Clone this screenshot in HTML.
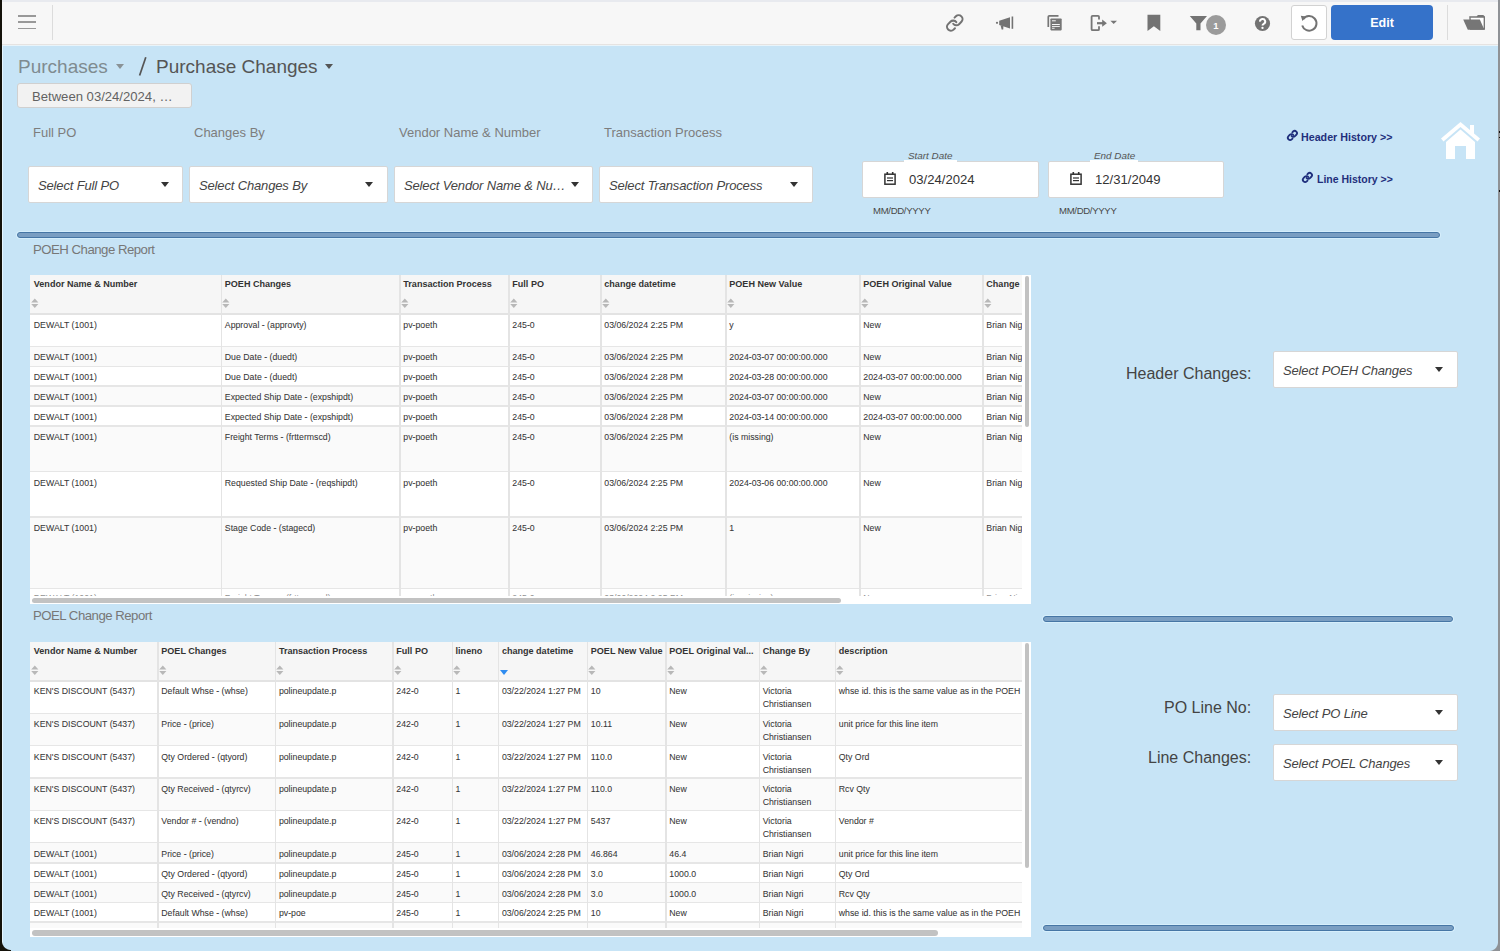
<!DOCTYPE html>
<html><head><meta charset="utf-8">
<style>
*{box-sizing:border-box;margin:0;padding:0}
html,body{width:1500px;height:951px;overflow:hidden;background:#c7e4f6;font-family:"Liberation Sans",sans-serif}
.a{position:absolute}
#frameL{left:0;top:0;width:2px;height:951px;background:#14120a}
#frameL2{left:2px;top:46px;width:1px;height:905px;background:#e6f6ff}
#frameR{left:1498px;top:0;width:2px;height:951px;background:#8f9296}
#topbar{left:2px;top:0;width:1496px;height:46px;background:#f7f7f7;border-bottom:1px solid #e9f4fa;box-shadow:inset 0 -1px 0 #e6e3e1}
#topstrip{left:2px;top:0;width:1496px;height:2px;background:#e8eaef}
.sep{width:1px;background:#dcdcdc}
.ham{left:18px;width:18px;height:1.7px;background:#999}
.crumb{font-size:19px;white-space:nowrap;line-height:1}
.caret{width:0;height:0;border-left:4px solid transparent;border-right:4px solid transparent;border-top:5px solid #333}
.lbl{font-size:13px;color:#7d7d7d;white-space:nowrap;line-height:1}
.dd{background:#fff;border:1px solid #d6d6d6;border-radius:2px}
.ddt{font-size:13px;font-style:italic;color:#444;white-space:nowrap;line-height:1;letter-spacing:-0.15px}
.bar{height:6px;border-radius:3px;background:#7a9ec2;border:1.5px solid #4676a5;box-shadow:0 0 0 1px #d6eefb}
.title{font-size:13.2px;letter-spacing:-0.5px;color:#777;white-space:nowrap;line-height:1}
.tbl{background:#fff;overflow:hidden}
.th{font-size:9.05px;font-weight:bold;color:#333;white-space:nowrap;line-height:1}
.td{font-size:8.75px;color:#363636;-webkit-text-stroke:0.05px #363636;white-space:nowrap;line-height:12.3px;transform:scaleY(1.08);transform-origin:0 0}
.rp{font-size:16px;color:#444;white-space:nowrap;line-height:1}
</style></head><body>
<div class="a" id="topbar"></div>
<div class="a" id="topstrip"></div>
<div class="a" id="frameL"></div>
<div class="a" id="frameL2"></div>
<div class="a" id="frameR"></div>
<div class="a" style="left:1498.5px;top:131px;width:1.5px;height:1.6px;background:#111"></div><div class="a" style="left:1498.5px;top:136.8px;width:1.5px;height:1.4px;background:#111"></div><div class="a" style="left:1498.5px;top:190px;width:1.5px;height:2px;background:#111"></div>
<div class="a" style="left:0;top:941px;width:11px;height:10px;background:radial-gradient(circle at 11px 0,rgba(0,0,0,0) 8.5px,#14120a 9.5px)"></div>
<div class="a" style="left:1489px;top:942px;width:11px;height:9px;background:radial-gradient(circle at 0 0,rgba(0,0,0,0) 8.5px,#8f9296 9.5px)"></div>

<!-- hamburger -->
<div class="a ham" style="top:15.1px"></div>
<div class="a ham" style="top:21.4px"></div>
<div class="a ham" style="top:27.6px"></div>
<div class="a sep" style="left:52px;top:5px;height:35px"></div>

<!-- Edit button -->
<div class="a" style="left:1331px;top:5px;width:102px;height:35px;background:#3572c9;border-radius:4px;color:#fff;font-size:12.5px;font-weight:bold;text-align:center;line-height:36px">Edit</div>
<div class="a" style="left:1291px;top:5px;width:36px;height:35px;background:#fff;border:1px solid #d2d2d2;border-radius:3px"></div>
<div class="a sep" style="left:1447px;top:5px;height:35px"></div>

<!-- breadcrumb -->
<div class="a crumb" style="left:18px;top:56.5px;color:#7f8b90">Purchases</div>
<div class="a caret" style="left:116px;top:64px;border-top-color:#8a9296"></div>
<svg class="a" style="left:136px;top:55px" width="14" height="23"><path d="M9.8 2.3 L3.6 20.6" stroke="#555" stroke-width="1.7"/></svg>
<div class="a crumb" style="left:156px;top:56.5px;color:#555">Purchase Changes</div>
<div class="a caret" style="left:325px;top:64px;border-top-color:#555"></div>

<div class="a" style="left:17px;top:83.3px;width:175px;height:24.4px;background:#f2f2f2;border:1px solid #d0d0d0;border-radius:3px"></div>
<div class="a" style="left:32px;top:90px;font-size:13.1px;color:#626262;white-space:nowrap;line-height:1">Between 03/24/2024, …</div>


<!-- toolbar icons -->
<svg class="a" style="left:940px;top:8px" width="30" height="30" viewBox="940 8 30 30">
 <g transform="translate(945.4 13.6) scale(0.78)" fill="none" stroke="#737373" stroke-width="2.6" stroke-linecap="round" stroke-linejoin="round">
  <path d="M10 13a5 5 0 0 0 7.54.54l3-3a5 5 0 0 0-7.07-7.07l-1.72 1.71"/>
  <path d="M14 11a5 5 0 0 0-7.54-.54l-3 3a5 5 0 0 0 7.07 7.07l1.71-1.71"/>
 </g>
</svg>
<svg class="a" style="left:990px;top:8px" width="30" height="30" viewBox="990 8 30 30">
 <g fill="#737373">
  <rect x="1011.6" y="16.5" width="1.6" height="12.3"/>
  <path d="M999.2 20.8 L1010 17.2 L1010 28.4 L999.2 25 Z"/>
  <circle cx="997" cy="22.8" r="1.1"/>
  <path d="M1000.6 25.2 L1003.4 26 L1003.2 29.4 L1001.6 29.4 Z"/>
 </g>
</svg>
<svg class="a" style="left:1040px;top:8px" width="80" height="30" viewBox="1040 8 80 30">
 <path d="M1048.3 27 V16.8 Q1048.3 15.8 1049.3 15.8 H1058.5" fill="none" stroke="#767676" stroke-width="1.7"/>
 <rect x="1050.4" y="18.4" width="11.3" height="12" rx="0.8" fill="#767676"/>
 <g fill="#f7f7f7">
  <rect x="1052" y="20.3" width="3.8" height="1"/>
  <rect x="1052" y="24" width="7.8" height="1"/>
  <rect x="1052" y="26" width="7.8" height="0.9"/>
  <rect x="1052" y="27.8" width="2.6" height="0.9"/>
 </g>
 <path d="M1099 19.5 V16.8 Q1099 15.8 1098 15.8 H1092.6 Q1091.6 15.8 1091.6 16.8 V29.2 Q1091.6 30.2 1092.6 30.2 H1098 Q1099 30.2 1099 29.2 V26.3" fill="none" stroke="#767676" stroke-width="1.8"/>
 <rect x="1097" y="22.1" width="6" height="2.2" fill="#767676"/>
 <path d="M1102.2 19.6 L1106.9 23.2 L1102.2 26.8 Z" fill="#767676"/>
 <path d="M1110.4 20.8 H1117 L1113.7 24 Z" fill="#767676"/>
</svg>
<svg class="a" style="left:1146px;top:14px" width="16" height="18" viewBox="0 0 16 18">
 <path d="M1.5 0.8 H14.3 V17 L7.9 12.3 L1.5 17 Z" fill="#737373"/>
</svg>
<svg class="a" style="left:1189px;top:15px" width="19" height="16" viewBox="0 0 19 16">
 <path d="M0.8 1 H18 L11.5 8.5 V15.2 H7.3 V8.5 Z" fill="#737373"/>
</svg>
<div class="a" style="left:1206px;top:14.5px;width:20px;height:20px;border-radius:50%;background:#9b9b9b;color:#fff;font-size:9.5px;font-weight:bold;text-align:center;line-height:21px">1</div>
<svg class="a" style="left:1254px;top:15px" width="17" height="17" viewBox="0 0 17 17">
 <circle cx="8.5" cy="8.5" r="7.6" fill="#737373"/>
 <path d="M6 6.6 a2.6 2.5 0 1 1 3.7 2.2 c-0.9 0.5 -1.2 0.9 -1.2 1.8" fill="none" stroke="#fff" stroke-width="2"/>
 <circle cx="8.5" cy="12.9" r="1.15" fill="#fff"/>
</svg>
<svg class="a" style="left:1299px;top:13px" width="20" height="20" viewBox="0 0 20 20">
 <path d="M4.2 6.2 A7.3 7.3 0 1 1 3.2 12.5" fill="none" stroke="#737373" stroke-width="2"/>
 <path d="M1.8 2.8 L7.2 3.6 L3.4 8 Z" fill="#737373"/>
</svg>
<svg class="a" style="left:1460px;top:10px" width="30" height="24" viewBox="1460 10 30 24">
 <path d="M1469.2 16.3 H1476.6 L1478 14.9 H1483.2 L1485 16.6 V29.8 H1470 Z" fill="#767676"/>
 <path d="M1470.6 17.7 H1483.6 V28 H1472 Z" fill="#fff"/>
 <path d="M1463.2 19.5 H1479.8 L1484.4 29.8 H1467.8 Z" fill="#767676"/>
</svg>

<!-- filter labels -->
<div class="a lbl" style="left:33px;top:126px">Full PO</div>
<div class="a lbl" style="left:194px;top:126px">Changes By</div>
<div class="a lbl" style="left:399px;top:126px">Vendor Name &amp; Number</div>
<div class="a lbl" style="left:604px;top:126px">Transaction Process</div>

<!-- dropdowns -->
<div class="a dd" style="left:28px;top:166px;width:155px;height:37px"></div>
<div class="a ddt" style="left:38px;top:179px">Select Full PO</div>
<div class="a caret" style="left:161px;top:182px"></div>
<div class="a dd" style="left:189px;top:166px;width:199px;height:37px"></div>
<div class="a ddt" style="left:199px;top:179px">Select Changes By</div>
<div class="a caret" style="left:365px;top:182px"></div>
<div class="a dd" style="left:394px;top:166px;width:199px;height:37px"></div>
<div class="a ddt" style="left:404px;top:179px">Select Vendor Name &amp; Nu…</div>
<div class="a caret" style="left:571px;top:182px"></div>
<div class="a dd" style="left:599px;top:166px;width:214px;height:37px"></div>
<div class="a ddt" style="left:609px;top:179px">Select Transaction Process</div>
<div class="a caret" style="left:790px;top:182px"></div>

<!-- dates -->
<div class="a dd" style="left:862px;top:160.5px;width:177px;height:37px"></div>
<div class="a" style="left:904px;top:159.5px;width:53px;height:2.5px;background:#fff"></div>
<div class="a" style="left:908px;top:151px;font-size:9.9px;font-style:italic;color:#555;line-height:1;white-space:nowrap">Start Date</div>
<svg class="a cal" style="left:884px;top:172px" width="12" height="13" viewBox="0 0 12 13"><g fill="none" stroke="#333" stroke-width="1.5"><rect x="0.9" y="2.2" width="10.2" height="10"/></g><g fill="#333"><rect x="2.5" y="0" width="1.6" height="3"/><rect x="7.9" y="0" width="1.6" height="3"/><rect x="3" y="5.4" width="6" height="1.2"/><rect x="3" y="8" width="6" height="1.2"/></g></svg>
<div class="a" style="left:909px;top:173px;font-size:13.1px;color:#333;line-height:1;white-space:nowrap">03/24/2024</div>
<div class="a" style="left:873px;top:206px;font-size:9.6px;letter-spacing:-0.33px;color:#484848;line-height:1;white-space:nowrap">MM/DD/YYYY</div>

<div class="a dd" style="left:1048px;top:160.5px;width:176px;height:37px"></div>
<div class="a" style="left:1090px;top:159.5px;width:48px;height:2.5px;background:#fff"></div>
<div class="a" style="left:1094px;top:151px;font-size:9.9px;font-style:italic;color:#555;line-height:1;white-space:nowrap">End Date</div>
<svg class="a cal" style="left:1070px;top:172px" width="12" height="13" viewBox="0 0 12 13"><g fill="none" stroke="#333" stroke-width="1.5"><rect x="0.9" y="2.2" width="10.2" height="10"/></g><g fill="#333"><rect x="2.5" y="0" width="1.6" height="3"/><rect x="7.9" y="0" width="1.6" height="3"/><rect x="3" y="5.4" width="6" height="1.2"/><rect x="3" y="8" width="6" height="1.2"/></g></svg>
<div class="a" style="left:1095px;top:173px;font-size:13.1px;color:#333;line-height:1;white-space:nowrap">12/31/2049</div>
<div class="a" style="left:1059px;top:206px;font-size:9.6px;letter-spacing:-0.33px;color:#484848;line-height:1;white-space:nowrap">MM/DD/YYYY</div>

<!-- history links -->
<svg class="a" style="left:1283.9px;top:127.1px" width="18" height="18" viewBox="1283.9 127.1 18 18"><g transform="translate(1286.8 130.0) scale(0.46)" fill="none" stroke="#1f2f7c" stroke-width="3.9" stroke-linecap="round" stroke-linejoin="round"><path d="M10 13a5 5 0 0 0 7.54.54l3-3a5 5 0 0 0-7.07-7.07l-1.72 1.71"/><path d="M14 11a5 5 0 0 0-7.54-.54l-3 3a5 5 0 0 0 7.07 7.07l1.71-1.71"/></g></svg>
<div class="a" style="left:1301px;top:131.8px;font-size:10.7px;font-weight:bold;color:#1f2f7c;line-height:1;white-space:nowrap">Header History &gt;&gt;</div>
<svg class="a" style="left:1298.8px;top:169.2px" width="18" height="18" viewBox="1298.8 169.2 18 18"><g transform="translate(1301.7 172.1) scale(0.46)" fill="none" stroke="#1f2f7c" stroke-width="3.9" stroke-linecap="round" stroke-linejoin="round"><path d="M10 13a5 5 0 0 0 7.54.54l3-3a5 5 0 0 0-7.07-7.07l-1.72 1.71"/><path d="M14 11a5 5 0 0 0-7.54-.54l-3 3a5 5 0 0 0 7.07 7.07l1.71-1.71"/></g></svg>
<div class="a" style="left:1317px;top:173.7px;font-size:10.5px;font-weight:bold;color:#1f2f7c;line-height:1;white-space:nowrap">Line History &gt;&gt;</div>

<!-- home icon -->
<svg class="a" style="left:1440px;top:121px" width="42" height="39" viewBox="0 0 42 39">
 <g fill="#fff">
  <path d="M1 17.5 L20.5 1 L40 17.5 L37.5 20.5 L20.5 6 L3.5 20.5 Z"/>
  <rect x="30" y="4" width="4" height="9"/>
  <path d="M6 21 L20.5 8.5 L35 21 V38 H26 V25 H15 V38 H6 Z"/>
 </g>
</svg>

<!-- separator bars -->
<div class="a bar" style="left:17px;top:232px;width:1423px"></div>
<div class="a bar" style="left:1043px;top:616px;width:410px"></div>
<div class="a bar" style="left:1043px;top:925px;width:411px"></div>

<!-- section titles -->
<div class="a title" style="left:33px;top:242.7px">POEH Change Report</div>
<div class="a title" style="left:33px;top:609.3px">POEL Change Report</div>

<!-- right panel -->
<div class="a rp" style="left:1126px;top:365.7px">Header Changes:</div>
<div class="a dd" style="left:1273px;top:351px;width:185px;height:37px"></div>
<div class="a ddt" style="left:1283px;top:364px">Select POEH Changes</div>
<div class="a caret" style="left:1435px;top:367px"></div>
<div class="a rp" style="left:1164px;top:699.8px">PO Line No:</div>
<div class="a dd" style="left:1273px;top:694px;width:185px;height:37px"></div>
<div class="a ddt" style="left:1283px;top:707px">Select PO Line</div>
<div class="a caret" style="left:1435px;top:710px"></div>
<div class="a rp" style="left:1148px;top:749.6px">Line Changes:</div>
<div class="a dd" style="left:1273px;top:744px;width:185px;height:37px"></div>
<div class="a ddt" style="left:1283px;top:757px">Select POEL Changes</div>
<div class="a caret" style="left:1435px;top:760px"></div>

<!-- TABLES -->
<div class="a tbl" style="left:30px;top:274.5px;width:1001px;height:329.5px">
<div class="a" style="left:0;top:0;width:992px;height:329.5px;overflow:hidden">
<div class="a" style="left:0;top:0;width:992px;height:38.50px;background:#f6f6f6"></div>
<div class="a" style="left:0;top:38.50px;width:992px;height:2px;background:#e3e3e3"></div>
<div class="a" style="left:0;top:40.50px;width:992px;height:30.55px;background:#fff"></div>
<div class="a" style="left:0;top:71.05px;width:992px;height:1.5px;background:#e6e6e6"></div>
<div class="a" style="left:0;top:72.55px;width:992px;height:18.50px;background:#fafafa"></div>
<div class="a" style="left:0;top:91.05px;width:992px;height:1.5px;background:#e6e6e6"></div>
<div class="a" style="left:0;top:92.55px;width:992px;height:18.30px;background:#fff"></div>
<div class="a" style="left:0;top:110.85px;width:992px;height:1.5px;background:#e6e6e6"></div>
<div class="a" style="left:0;top:112.35px;width:992px;height:18.50px;background:#fafafa"></div>
<div class="a" style="left:0;top:130.85px;width:992px;height:1.5px;background:#e6e6e6"></div>
<div class="a" style="left:0;top:132.35px;width:992px;height:18.50px;background:#fff"></div>
<div class="a" style="left:0;top:150.85px;width:992px;height:1.5px;background:#e6e6e6"></div>
<div class="a" style="left:0;top:152.35px;width:992px;height:43.80px;background:#fafafa"></div>
<div class="a" style="left:0;top:196.15px;width:992px;height:1.5px;background:#e6e6e6"></div>
<div class="a" style="left:0;top:197.65px;width:992px;height:44.00px;background:#fff"></div>
<div class="a" style="left:0;top:241.65px;width:992px;height:1.5px;background:#e6e6e6"></div>
<div class="a" style="left:0;top:243.15px;width:992px;height:69.90px;background:#fafafa"></div>
<div class="a" style="left:0;top:313.05px;width:992px;height:1.5px;background:#e6e6e6"></div>
<div class="a" style="left:0;top:314.55px;width:992px;height:40px;background:#fff"></div>
<div class="a" style="left:190.7px;top:0;width:1.6px;height:329.5px;background:#e4e4e4"></div>
<div class="a" style="left:369.2px;top:0;width:1.6px;height:329.5px;background:#e4e4e4"></div>
<div class="a" style="left:478.2px;top:0;width:1.6px;height:329.5px;background:#e4e4e4"></div>
<div class="a" style="left:570.2px;top:0;width:1.6px;height:329.5px;background:#e4e4e4"></div>
<div class="a" style="left:695.2px;top:0;width:1.6px;height:329.5px;background:#e4e4e4"></div>
<div class="a" style="left:829.2px;top:0;width:1.6px;height:329.5px;background:#e4e4e4"></div>
<div class="a" style="left:952.2px;top:0;width:1.6px;height:329.5px;background:#e4e4e4"></div>
<div class="a th" style="left:3.8px;top:5.7px">Vendor Name &amp; Number</div>
<svg class="a" style="left:1.3px;top:23px" width="8" height="11" viewBox="0 0 8 11"><path d="M0.2 4.6 L3.8 0.6 L7.4 4.6 Z M0.2 6 L3.8 10 L7.4 6 Z" fill="#b8b8b8"/></svg>
<div class="a th" style="left:194.8px;top:5.7px">POEH Changes</div>
<svg class="a" style="left:192.3px;top:23px" width="8" height="11" viewBox="0 0 8 11"><path d="M0.2 4.6 L3.8 0.6 L7.4 4.6 Z M0.2 6 L3.8 10 L7.4 6 Z" fill="#b8b8b8"/></svg>
<div class="a th" style="left:373.3px;top:5.7px">Transaction Process</div>
<svg class="a" style="left:370.8px;top:23px" width="8" height="11" viewBox="0 0 8 11"><path d="M0.2 4.6 L3.8 0.6 L7.4 4.6 Z M0.2 6 L3.8 10 L7.4 6 Z" fill="#b8b8b8"/></svg>
<div class="a th" style="left:482.3px;top:5.7px">Full PO</div>
<svg class="a" style="left:479.8px;top:23px" width="8" height="11" viewBox="0 0 8 11"><path d="M0.2 4.6 L3.8 0.6 L7.4 4.6 Z M0.2 6 L3.8 10 L7.4 6 Z" fill="#b8b8b8"/></svg>
<div class="a th" style="left:574.3px;top:5.7px">change datetime</div>
<svg class="a" style="left:571.8px;top:23px" width="8" height="11" viewBox="0 0 8 11"><path d="M0.2 4.6 L3.8 0.6 L7.4 4.6 Z M0.2 6 L3.8 10 L7.4 6 Z" fill="#b8b8b8"/></svg>
<div class="a th" style="left:699.3px;top:5.7px">POEH New Value</div>
<svg class="a" style="left:696.8px;top:23px" width="8" height="11" viewBox="0 0 8 11"><path d="M0.2 4.6 L3.8 0.6 L7.4 4.6 Z M0.2 6 L3.8 10 L7.4 6 Z" fill="#b8b8b8"/></svg>
<div class="a th" style="left:833.3px;top:5.7px">POEH Original Value</div>
<svg class="a" style="left:830.8px;top:23px" width="8" height="11" viewBox="0 0 8 11"><path d="M0.2 4.6 L3.8 0.6 L7.4 4.6 Z M0.2 6 L3.8 10 L7.4 6 Z" fill="#b8b8b8"/></svg>
<div class="a th" style="left:956.3px;top:5.7px">Change By</div>
<svg class="a" style="left:953.8px;top:23px" width="8" height="11" viewBox="0 0 8 11"><path d="M0.2 4.6 L3.8 0.6 L7.4 4.6 Z M0.2 6 L3.8 10 L7.4 6 Z" fill="#b8b8b8"/></svg>
<div class="a td" style="left:3.8px;top:43.0px">DEWALT (1001)</div>
<div class="a td" style="left:194.8px;top:43.0px">Approval - (approvty)</div>
<div class="a td" style="left:373.3px;top:43.0px">pv-poeth</div>
<div class="a td" style="left:482.3px;top:43.0px">245-0</div>
<div class="a td" style="left:574.3px;top:43.0px">03/06/2024 2:25 PM</div>
<div class="a td" style="left:699.3px;top:43.0px">y</div>
<div class="a td" style="left:833.3px;top:43.0px">New</div>
<div class="a td" style="left:956.3px;top:43.0px">Brian Nigri</div>
<div class="a td" style="left:3.8px;top:75.9px">DEWALT (1001)</div>
<div class="a td" style="left:194.8px;top:75.9px">Due Date - (duedt)</div>
<div class="a td" style="left:373.3px;top:75.9px">pv-poeth</div>
<div class="a td" style="left:482.3px;top:75.9px">245-0</div>
<div class="a td" style="left:574.3px;top:75.9px">03/06/2024 2:25 PM</div>
<div class="a td" style="left:699.3px;top:75.9px">2024-03-07 00:00:00.000</div>
<div class="a td" style="left:833.3px;top:75.9px">New</div>
<div class="a td" style="left:956.3px;top:75.9px">Brian Nigri</div>
<div class="a td" style="left:3.8px;top:95.9px">DEWALT (1001)</div>
<div class="a td" style="left:194.8px;top:95.9px">Due Date - (duedt)</div>
<div class="a td" style="left:373.3px;top:95.9px">pv-poeth</div>
<div class="a td" style="left:482.3px;top:95.9px">245-0</div>
<div class="a td" style="left:574.3px;top:95.9px">03/06/2024 2:28 PM</div>
<div class="a td" style="left:699.3px;top:95.9px">2024-03-28 00:00:00.000</div>
<div class="a td" style="left:833.3px;top:95.9px">2024-03-07 00:00:00.000</div>
<div class="a td" style="left:956.3px;top:95.9px">Brian Nigri</div>
<div class="a td" style="left:3.8px;top:115.7px">DEWALT (1001)</div>
<div class="a td" style="left:194.8px;top:115.7px">Expected Ship Date - (expshipdt)</div>
<div class="a td" style="left:373.3px;top:115.7px">pv-poeth</div>
<div class="a td" style="left:482.3px;top:115.7px">245-0</div>
<div class="a td" style="left:574.3px;top:115.7px">03/06/2024 2:25 PM</div>
<div class="a td" style="left:699.3px;top:115.7px">2024-03-07 00:00:00.000</div>
<div class="a td" style="left:833.3px;top:115.7px">New</div>
<div class="a td" style="left:956.3px;top:115.7px">Brian Nigri</div>
<div class="a td" style="left:3.8px;top:135.7px">DEWALT (1001)</div>
<div class="a td" style="left:194.8px;top:135.7px">Expected Ship Date - (expshipdt)</div>
<div class="a td" style="left:373.3px;top:135.7px">pv-poeth</div>
<div class="a td" style="left:482.3px;top:135.7px">245-0</div>
<div class="a td" style="left:574.3px;top:135.7px">03/06/2024 2:28 PM</div>
<div class="a td" style="left:699.3px;top:135.7px">2024-03-14 00:00:00.000</div>
<div class="a td" style="left:833.3px;top:135.7px">2024-03-07 00:00:00.000</div>
<div class="a td" style="left:956.3px;top:135.7px">Brian Nigri</div>
<div class="a td" style="left:3.8px;top:155.7px">DEWALT (1001)</div>
<div class="a td" style="left:194.8px;top:155.7px">Freight Terms - (frttermscd)</div>
<div class="a td" style="left:373.3px;top:155.7px">pv-poeth</div>
<div class="a td" style="left:482.3px;top:155.7px">245-0</div>
<div class="a td" style="left:574.3px;top:155.7px">03/06/2024 2:25 PM</div>
<div class="a td" style="left:699.3px;top:155.7px">(is missing)</div>
<div class="a td" style="left:833.3px;top:155.7px">New</div>
<div class="a td" style="left:956.3px;top:155.7px">Brian Nigri</div>
<div class="a td" style="left:3.8px;top:201.0px">DEWALT (1001)</div>
<div class="a td" style="left:194.8px;top:201.0px">Requested Ship Date - (reqshipdt)</div>
<div class="a td" style="left:373.3px;top:201.0px">pv-poeth</div>
<div class="a td" style="left:482.3px;top:201.0px">245-0</div>
<div class="a td" style="left:574.3px;top:201.0px">03/06/2024 2:25 PM</div>
<div class="a td" style="left:699.3px;top:201.0px">2024-03-06 00:00:00.000</div>
<div class="a td" style="left:833.3px;top:201.0px">New</div>
<div class="a td" style="left:956.3px;top:201.0px">Brian Nigri</div>
<div class="a td" style="left:3.8px;top:246.5px">DEWALT (1001)</div>
<div class="a td" style="left:194.8px;top:246.5px">Stage Code - (stagecd)</div>
<div class="a td" style="left:373.3px;top:246.5px">pv-poeth</div>
<div class="a td" style="left:482.3px;top:246.5px">245-0</div>
<div class="a td" style="left:574.3px;top:246.5px">03/06/2024 2:25 PM</div>
<div class="a td" style="left:699.3px;top:246.5px">1</div>
<div class="a td" style="left:833.3px;top:246.5px">New</div>
<div class="a td" style="left:956.3px;top:246.5px">Brian Nigri</div>
<div class="a td" style="left:3.8px;top:316.6px;opacity:.55">DEWALT (1001)</div>
<div class="a td" style="left:194.8px;top:316.6px;opacity:.55">Freight Terms - (frttermscd)</div>
<div class="a td" style="left:373.3px;top:316.6px;opacity:.55">pv-poeth</div>
<div class="a td" style="left:482.3px;top:316.6px;opacity:.55">245-0</div>
<div class="a td" style="left:574.3px;top:316.6px;opacity:.55">03/06/2024 2:25 PM</div>
<div class="a td" style="left:699.3px;top:316.6px;opacity:.55">(is missing)</div>
<div class="a td" style="left:833.3px;top:316.6px;opacity:.55">New</div>
<div class="a td" style="left:956.3px;top:316.6px;opacity:.55">Brian Nigri</div>
</div>
<div class="a" style="left:0;top:321.5px;width:992px;height:8.0px;background:#fff"></div>
<div class="a" style="left:2px;top:323.9px;width:809px;height:4.399999999999977px;background:#c2c2c2;border-radius:3px"></div>
<div class="a" style="left:994.5px;top:1.5px;width:4.5px;height:151px;background:#c2c2c2;border-radius:3px"></div>
</div>
<div class="a tbl" style="left:30px;top:641.6px;width:1001px;height:295.69999999999993px">
<div class="a" style="left:0;top:0;width:992px;height:295.69999999999993px;overflow:hidden">
<div class="a" style="left:0;top:0;width:992px;height:38.20px;background:#f6f6f6"></div>
<div class="a" style="left:0;top:38.20px;width:992px;height:2px;background:#e3e3e3"></div>
<div class="a" style="left:0;top:40.20px;width:992px;height:30.85px;background:#fff"></div>
<div class="a" style="left:0;top:71.05px;width:992px;height:1.5px;background:#e6e6e6"></div>
<div class="a" style="left:0;top:72.55px;width:992px;height:30.80px;background:#fafafa"></div>
<div class="a" style="left:0;top:103.35px;width:992px;height:1.5px;background:#e6e6e6"></div>
<div class="a" style="left:0;top:104.85px;width:992px;height:30.90px;background:#fff"></div>
<div class="a" style="left:0;top:135.75px;width:992px;height:1.5px;background:#e6e6e6"></div>
<div class="a" style="left:0;top:137.25px;width:992px;height:30.80px;background:#fafafa"></div>
<div class="a" style="left:0;top:168.05px;width:992px;height:1.5px;background:#e6e6e6"></div>
<div class="a" style="left:0;top:169.55px;width:992px;height:30.70px;background:#fff"></div>
<div class="a" style="left:0;top:200.25px;width:992px;height:1.5px;background:#e6e6e6"></div>
<div class="a" style="left:0;top:201.75px;width:992px;height:18.70px;background:#fafafa"></div>
<div class="a" style="left:0;top:220.45px;width:992px;height:1.5px;background:#e6e6e6"></div>
<div class="a" style="left:0;top:221.95px;width:992px;height:18.20px;background:#fff"></div>
<div class="a" style="left:0;top:240.15px;width:992px;height:1.5px;background:#e6e6e6"></div>
<div class="a" style="left:0;top:241.65px;width:992px;height:18.30px;background:#fafafa"></div>
<div class="a" style="left:0;top:259.95px;width:992px;height:1.5px;background:#e6e6e6"></div>
<div class="a" style="left:0;top:261.45px;width:992px;height:18.40px;background:#fff"></div>
<div class="a" style="left:0;top:279.85px;width:992px;height:1.5px;background:#e6e6e6"></div>
<div class="a" style="left:0;top:281.35px;width:992px;height:40px;background:#fafafa"></div>
<div class="a" style="left:127.2px;top:0;width:1.6px;height:295.69999999999993px;background:#e4e4e4"></div>
<div class="a" style="left:244.8px;top:0;width:1.6px;height:295.69999999999993px;background:#e4e4e4"></div>
<div class="a" style="left:362.2px;top:0;width:1.6px;height:295.69999999999993px;background:#e4e4e4"></div>
<div class="a" style="left:421.5px;top:0;width:1.6px;height:295.69999999999993px;background:#e4e4e4"></div>
<div class="a" style="left:467.8px;top:0;width:1.6px;height:295.69999999999993px;background:#e4e4e4"></div>
<div class="a" style="left:556.7px;top:0;width:1.6px;height:295.69999999999993px;background:#e4e4e4"></div>
<div class="a" style="left:635.2px;top:0;width:1.6px;height:295.69999999999993px;background:#e4e4e4"></div>
<div class="a" style="left:728.6px;top:0;width:1.6px;height:295.69999999999993px;background:#e4e4e4"></div>
<div class="a" style="left:804.7px;top:0;width:1.6px;height:295.69999999999993px;background:#e4e4e4"></div>
<div class="a th" style="left:3.8px;top:5.7px">Vendor Name &amp; Number</div>
<svg class="a" style="left:1.3px;top:23px" width="8" height="11" viewBox="0 0 8 11"><path d="M0.2 4.6 L3.8 0.6 L7.4 4.6 Z M0.2 6 L3.8 10 L7.4 6 Z" fill="#b8b8b8"/></svg>
<div class="a th" style="left:131.3px;top:5.7px">POEL Changes</div>
<svg class="a" style="left:128.8px;top:23px" width="8" height="11" viewBox="0 0 8 11"><path d="M0.2 4.6 L3.8 0.6 L7.4 4.6 Z M0.2 6 L3.8 10 L7.4 6 Z" fill="#b8b8b8"/></svg>
<div class="a th" style="left:248.9px;top:5.7px">Transaction Process</div>
<svg class="a" style="left:246.4px;top:23px" width="8" height="11" viewBox="0 0 8 11"><path d="M0.2 4.6 L3.8 0.6 L7.4 4.6 Z M0.2 6 L3.8 10 L7.4 6 Z" fill="#b8b8b8"/></svg>
<div class="a th" style="left:366.3px;top:5.7px">Full PO</div>
<svg class="a" style="left:363.8px;top:23px" width="8" height="11" viewBox="0 0 8 11"><path d="M0.2 4.6 L3.8 0.6 L7.4 4.6 Z M0.2 6 L3.8 10 L7.4 6 Z" fill="#b8b8b8"/></svg>
<div class="a th" style="left:425.6px;top:5.7px">lineno</div>
<svg class="a" style="left:423.1px;top:23px" width="8" height="11" viewBox="0 0 8 11"><path d="M0.2 4.6 L3.8 0.6 L7.4 4.6 Z M0.2 6 L3.8 10 L7.4 6 Z" fill="#b8b8b8"/></svg>
<div class="a th" style="left:471.9px;top:5.7px">change datetime</div>
<div class="a" style="left:469.6px;top:28.6px;width:0;height:0;border-left:4.5px solid transparent;border-right:4.5px solid transparent;border-top:5px solid #2f8cf0"></div>
<div class="a th" style="left:560.8px;top:5.7px">POEL New Value</div>
<svg class="a" style="left:558.3px;top:23px" width="8" height="11" viewBox="0 0 8 11"><path d="M0.2 4.6 L3.8 0.6 L7.4 4.6 Z M0.2 6 L3.8 10 L7.4 6 Z" fill="#b8b8b8"/></svg>
<div class="a th" style="left:639.3px;top:5.7px">POEL Original Val...</div>
<svg class="a" style="left:636.8px;top:23px" width="8" height="11" viewBox="0 0 8 11"><path d="M0.2 4.6 L3.8 0.6 L7.4 4.6 Z M0.2 6 L3.8 10 L7.4 6 Z" fill="#b8b8b8"/></svg>
<div class="a th" style="left:732.7px;top:5.7px">Change By</div>
<svg class="a" style="left:730.2px;top:23px" width="8" height="11" viewBox="0 0 8 11"><path d="M0.2 4.6 L3.8 0.6 L7.4 4.6 Z M0.2 6 L3.8 10 L7.4 6 Z" fill="#b8b8b8"/></svg>
<div class="a th" style="left:808.8px;top:5.7px">description</div>
<svg class="a" style="left:806.3px;top:23px" width="8" height="11" viewBox="0 0 8 11"><path d="M0.2 4.6 L3.8 0.6 L7.4 4.6 Z M0.2 6 L3.8 10 L7.4 6 Z" fill="#b8b8b8"/></svg>
<div class="a td" style="left:3.8px;top:42.7px">KEN'S DISCOUNT (5437)</div>
<div class="a td" style="left:131.3px;top:42.7px">Default Whse - (whse)</div>
<div class="a td" style="left:248.9px;top:42.7px">polineupdate.p</div>
<div class="a td" style="left:366.3px;top:42.7px">242-0</div>
<div class="a td" style="left:425.6px;top:42.7px">1</div>
<div class="a td" style="left:471.9px;top:42.7px">03/22/2024 1:27 PM</div>
<div class="a td" style="left:560.8px;top:42.7px">10</div>
<div class="a td" style="left:639.3px;top:42.7px">New</div>
<div class="a td" style="left:732.7px;top:42.7px">Victoria<br>Christiansen</div>
<div class="a td" style="left:808.8px;top:42.7px">whse id. this is the same value as in the POEH</div>
<div class="a td" style="left:3.8px;top:75.9px">KEN'S DISCOUNT (5437)</div>
<div class="a td" style="left:131.3px;top:75.9px">Price - (price)</div>
<div class="a td" style="left:248.9px;top:75.9px">polineupdate.p</div>
<div class="a td" style="left:366.3px;top:75.9px">242-0</div>
<div class="a td" style="left:425.6px;top:75.9px">1</div>
<div class="a td" style="left:471.9px;top:75.9px">03/22/2024 1:27 PM</div>
<div class="a td" style="left:560.8px;top:75.9px">10.11</div>
<div class="a td" style="left:639.3px;top:75.9px">New</div>
<div class="a td" style="left:732.7px;top:75.9px">Victoria<br>Christiansen</div>
<div class="a td" style="left:808.8px;top:75.9px">unit price for this line item</div>
<div class="a td" style="left:3.8px;top:108.2px">KEN'S DISCOUNT (5437)</div>
<div class="a td" style="left:131.3px;top:108.2px">Qty Ordered - (qtyord)</div>
<div class="a td" style="left:248.9px;top:108.2px">polineupdate.p</div>
<div class="a td" style="left:366.3px;top:108.2px">242-0</div>
<div class="a td" style="left:425.6px;top:108.2px">1</div>
<div class="a td" style="left:471.9px;top:108.2px">03/22/2024 1:27 PM</div>
<div class="a td" style="left:560.8px;top:108.2px">110.0</div>
<div class="a td" style="left:639.3px;top:108.2px">New</div>
<div class="a td" style="left:732.7px;top:108.2px">Victoria<br>Christiansen</div>
<div class="a td" style="left:808.8px;top:108.2px">Qty Ord</div>
<div class="a td" style="left:3.8px;top:140.6px">KEN'S DISCOUNT (5437)</div>
<div class="a td" style="left:131.3px;top:140.6px">Qty Received - (qtyrcv)</div>
<div class="a td" style="left:248.9px;top:140.6px">polineupdate.p</div>
<div class="a td" style="left:366.3px;top:140.6px">242-0</div>
<div class="a td" style="left:425.6px;top:140.6px">1</div>
<div class="a td" style="left:471.9px;top:140.6px">03/22/2024 1:27 PM</div>
<div class="a td" style="left:560.8px;top:140.6px">110.0</div>
<div class="a td" style="left:639.3px;top:140.6px">New</div>
<div class="a td" style="left:732.7px;top:140.6px">Victoria<br>Christiansen</div>
<div class="a td" style="left:808.8px;top:140.6px">Rcv Qty</div>
<div class="a td" style="left:3.8px;top:172.9px">KEN'S DISCOUNT (5437)</div>
<div class="a td" style="left:131.3px;top:172.9px">Vendor # - (vendno)</div>
<div class="a td" style="left:248.9px;top:172.9px">polineupdate.p</div>
<div class="a td" style="left:366.3px;top:172.9px">242-0</div>
<div class="a td" style="left:425.6px;top:172.9px">1</div>
<div class="a td" style="left:471.9px;top:172.9px">03/22/2024 1:27 PM</div>
<div class="a td" style="left:560.8px;top:172.9px">5437</div>
<div class="a td" style="left:639.3px;top:172.9px">New</div>
<div class="a td" style="left:732.7px;top:172.9px">Victoria<br>Christiansen</div>
<div class="a td" style="left:808.8px;top:172.9px">Vendor #</div>
<div class="a td" style="left:3.8px;top:205.1px">DEWALT (1001)</div>
<div class="a td" style="left:131.3px;top:205.1px">Price - (price)</div>
<div class="a td" style="left:248.9px;top:205.1px">polineupdate.p</div>
<div class="a td" style="left:366.3px;top:205.1px">245-0</div>
<div class="a td" style="left:425.6px;top:205.1px">1</div>
<div class="a td" style="left:471.9px;top:205.1px">03/06/2024 2:28 PM</div>
<div class="a td" style="left:560.8px;top:205.1px">46.864</div>
<div class="a td" style="left:639.3px;top:205.1px">46.4</div>
<div class="a td" style="left:732.7px;top:205.1px">Brian Nigri</div>
<div class="a td" style="left:808.8px;top:205.1px">unit price for this line item</div>
<div class="a td" style="left:3.8px;top:225.3px">DEWALT (1001)</div>
<div class="a td" style="left:131.3px;top:225.3px">Qty Ordered - (qtyord)</div>
<div class="a td" style="left:248.9px;top:225.3px">polineupdate.p</div>
<div class="a td" style="left:366.3px;top:225.3px">245-0</div>
<div class="a td" style="left:425.6px;top:225.3px">1</div>
<div class="a td" style="left:471.9px;top:225.3px">03/06/2024 2:28 PM</div>
<div class="a td" style="left:560.8px;top:225.3px">3.0</div>
<div class="a td" style="left:639.3px;top:225.3px">1000.0</div>
<div class="a td" style="left:732.7px;top:225.3px">Brian Nigri</div>
<div class="a td" style="left:808.8px;top:225.3px">Qty Ord</div>
<div class="a td" style="left:3.8px;top:245.0px">DEWALT (1001)</div>
<div class="a td" style="left:131.3px;top:245.0px">Qty Received - (qtyrcv)</div>
<div class="a td" style="left:248.9px;top:245.0px">polineupdate.p</div>
<div class="a td" style="left:366.3px;top:245.0px">245-0</div>
<div class="a td" style="left:425.6px;top:245.0px">1</div>
<div class="a td" style="left:471.9px;top:245.0px">03/06/2024 2:28 PM</div>
<div class="a td" style="left:560.8px;top:245.0px">3.0</div>
<div class="a td" style="left:639.3px;top:245.0px">1000.0</div>
<div class="a td" style="left:732.7px;top:245.0px">Brian Nigri</div>
<div class="a td" style="left:808.8px;top:245.0px">Rcv Qty</div>
<div class="a td" style="left:3.8px;top:264.8px">DEWALT (1001)</div>
<div class="a td" style="left:131.3px;top:264.8px">Default Whse - (whse)</div>
<div class="a td" style="left:248.9px;top:264.8px">pv-poe</div>
<div class="a td" style="left:366.3px;top:264.8px">245-0</div>
<div class="a td" style="left:425.6px;top:264.8px">1</div>
<div class="a td" style="left:471.9px;top:264.8px">03/06/2024 2:25 PM</div>
<div class="a td" style="left:560.8px;top:264.8px">10</div>
<div class="a td" style="left:639.3px;top:264.8px">New</div>
<div class="a td" style="left:732.7px;top:264.8px">Brian Nigri</div>
<div class="a td" style="left:808.8px;top:264.8px">whse id. this is the same value as in the POEH</div>
</div>
<div class="a" style="left:0;top:286.4px;width:992px;height:9.3px;background:#fff"></div>
<div class="a" style="left:2px;top:288.79999999999995px;width:906px;height:5.2000000000000455px;background:#c2c2c2;border-radius:3px"></div>
<div class="a" style="left:994.5px;top:1.3999999999999773px;width:4.5px;height:225px;background:#c2c2c2;border-radius:3px"></div>
</div>
<!-- /TABLES -->
</body></html>
